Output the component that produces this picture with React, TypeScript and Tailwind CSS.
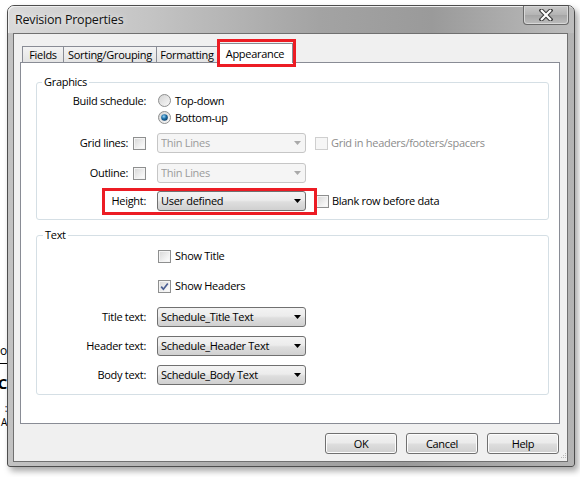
import React from "react";

function Arrow({ disabled }: { disabled?: boolean }) {
  return (
    <svg width="7" height="4" viewBox="0 0 7 4" className="shrink-0">
      <path d="M0 0H7L3.5 4Z" fill={disabled ? "#a9a9a9" : "#000"} />
    </svg>
  );
}

function Dropdown({ value, disabled }: { value: string; disabled?: boolean }) {
  return (
    <div
      className={
        disabled
          ? "w-[149px] h-[20px] rounded-[3px] border border-[#c6c6c6] bg-[#f5f5f5] text-[#9b9b9b] flex items-center pl-[3px] pr-[4px]"
          : "w-[149px] h-[20px] rounded-[3px] border border-[#707070] bg-[linear-gradient(#f3f3f3,#ececec_45%,#dedede_55%,#d0d0d0)] text-black flex items-center pl-[3px] pr-[4px]"
      }
    >
      <span className="flex-1 whitespace-nowrap overflow-hidden">{value}</span>
      <Arrow disabled={disabled} />
    </div>
  );
}

function Checkbox({ checked, disabled }: { checked?: boolean; disabled?: boolean }) {
  return (
    <span
      className={
        disabled
          ? "w-[13px] h-[13px] shrink-0 border border-[#cfcfcf] bg-[#f6f6f6] flex items-center justify-center"
          : "w-[13px] h-[13px] shrink-0 border border-[#8e8f8f] bg-[linear-gradient(135deg,#d6d6d6,#f4f4f4_70%,#ffffff)] shadow-[inset_0_0_0_1px_#f4f4f4] flex items-center justify-center"
      }
    >
      {checked && (
        <svg width="9" height="9" viewBox="0 0 9 9">
          <path d="M1.2 4.6L3.4 7.2L7.8 1.4" stroke="#4a5e92" strokeWidth="1.7" fill="none" />
        </svg>
      )}
    </span>
  );
}

function Radio({ checked }: { checked?: boolean }) {
  return (
    <svg width="13" height="13" viewBox="0 0 13 13" className="shrink-0">
      <defs>
        <linearGradient id="rg" x1="0" y1="0" x2="1" y2="1">
          <stop offset="0" stopColor="#d2d2d2" />
          <stop offset="1" stopColor="#fafafa" />
        </linearGradient>
        <radialGradient id="rd" cx="0.4" cy="0.35" r="0.7">
          <stop offset="0" stopColor="#9fd6f4" />
          <stop offset="0.5" stopColor="#1b6fa8" />
          <stop offset="1" stopColor="#0b3a62" />
        </radialGradient>
      </defs>
      <circle cx="6.5" cy="6.5" r="6" fill="url(#rg)" stroke="#8e8f8f" />
      {checked && <circle cx="6.5" cy="6.5" r="3.3" fill="url(#rd)" />}
    </svg>
  );
}

function Label({ children, w = "w-[109px]" }: { children: React.ReactNode; w?: string }) {
  return <div className={`${w} shrink-0 flex items-center justify-end gap-[5px] whitespace-nowrap`}>{children}</div>;
}

function Button({ children }: { children: React.ReactNode }) {
  return (
    <div className="w-[72px] h-[21px] rounded-[3px] border border-[#707070] bg-[linear-gradient(#f2f2f2,#ebebeb_45%,#dddddd_55%,#cfcfcf)] shadow-[inset_0_0_0_1px_#fcfcfc] flex items-center justify-center text-black">
      {children}
    </div>
  );
}

export default function App() {
  return (
    <div className="relative w-[580px] h-[477px] bg-white flex overflow-hidden font-['Open_Sans','Noto_Sans',sans-serif] text-[11px] tracking-[-0.3px] leading-[14px] text-black">
      {/* desktop behind the dialog */}
      <div className="w-[7px] shrink-0 overflow-hidden flex flex-col items-end pt-[344px] text-black">
        <span className="text-[12px] leading-[14px] whitespace-nowrap">Do</span>
        <div className="w-[7px] h-px bg-black mt-[5px]" />
        <span className="mt-[12px] text-[15px] leading-[15px] font-bold whitespace-nowrap">C</span>
        <span className="mt-[12px] text-[10px] leading-[10px] whitespace-nowrap">:</span>
        <span className="mt-[4px] text-[10px] leading-[10px] whitespace-nowrap">A</span>
      </div>

      {/* window */}
      <div className="mt-[5px] w-[568px] h-[462px] shrink-0 flex flex-col rounded-t-[7px] rounded-b-[3px] border border-[#4d4d4d] bg-[linear-gradient(90deg,#c2c2c2,#a9a9a9_45%,#9b9b9b_70%,#b4b4b4)] shadow-[3px_4px_6px_rgba(0,0,0,0.35)]">
        {/* title bar */}
        <div className="h-[27px] shrink-0 flex items-start bg-[linear-gradient(90deg,#dadada,#c4c4c4_25%,#a3a3a3_55%,#9a9a9a_75%,#bdbdbd)] rounded-t-[6px] shadow-[inset_1px_1px_0_#efefef]">
          <span className="ml-[7px] mt-[6px] text-[12.5px] leading-[16px] tracking-[-0.2px] text-[#111] [text-shadow:0_0_6px_#ffffff]">
            Revision Properties
          </span>
          <div className="flex-1" />
          <div className="mr-[5px] w-[46px] h-[19px] rounded-b-[4px] border border-t-0 border-[#6a6a6a] bg-[linear-gradient(#c9c9c9,#b3b3b3_50%,#a5a5a5_50%,#bcbcbc)] shadow-[inset_0_0_0_1px_#d8d8d8] flex items-center justify-center">
            <svg width="14" height="12" viewBox="0 0 14 12">
              <path d="M2.5 1.5L11.5 10.5M11.5 1.5L2.5 10.5" stroke="#3a3a3a" strokeWidth="4.2" strokeLinecap="square" />
              <path d="M2.8 1.8L11.2 10.2M11.2 1.8L2.8 10.2" stroke="#ffffff" strokeWidth="2.2" strokeLinecap="square" />
            </svg>
          </div>
        </div>

        {/* client area */}
        <div className="ml-[5px] mr-[6px] mb-[4px] flex-1 border border-[#707070] bg-[#f0f0f0] flex flex-col">
          {/* tabs */}
          <div className="ml-[6px] mt-[8px] h-[20px] flex items-end">
            <div className="ml-[2px] w-[42px] h-[16px] border border-b-0 border-[#898c95] bg-[linear-gradient(#f3f3f3,#e4e4e4)] flex items-center justify-center">
              Fields
            </div>
            <div className="-ml-px w-[94px] h-[16px] border border-b-0 border-[#898c95] bg-[linear-gradient(#f3f3f3,#e4e4e4)] flex items-center justify-center">
              Sorting/Grouping
            </div>
            <div className="-ml-px w-[62px] h-[16px] border border-b-0 border-[#898c95] bg-[linear-gradient(#f3f3f3,#e4e4e4)] flex items-center justify-center">
              Formatting
            </div>
            <div className="-ml-[1px] w-[76px] h-[20px] border border-b-0 border-[#898c95] bg-white flex items-center justify-center mb-[-1px] relative z-10">
              Appearance
            </div>
          </div>

          {/* tab panel */}
          <div className="ml-[6px] w-[540px] h-[362px] border border-[#898c95] bg-white flex flex-col pl-[15px] pr-[10px] pt-[12px]">
            {/* Graphics */}
            <fieldset className="border border-[#d5dfe5] rounded-[3px] pb-[8px]">
              <legend className="ml-[5px] px-[2px] leading-[14px]">Graphics</legend>
              <div className="flex flex-col pt-[3px]">
                <div className="h-[17px] flex items-center">
                  <Label>Build schedule:</Label>
                  <div className="ml-[12px] flex items-center gap-[4px]">
                    <Radio />
                    <span>Top-down</span>
                  </div>
                </div>
                <div className="h-[17px] flex items-center">
                  <Label>{""}</Label>
                  <div className="ml-[12px] flex items-center gap-[4px]">
                    <Radio checked />
                    <span>Bottom-up</span>
                  </div>
                </div>
                <div className="mt-[7px] h-[20px] flex items-center">
                  <Label>
                    <span>Grid lines:</span>
                    <Checkbox />
                  </Label>
                  <div className="ml-[11px]">
                    <Dropdown value="Thin Lines" disabled />
                  </div>
                  <div className="ml-[9px] flex items-center gap-[3px] text-[#8c8c8c]">
                    <Checkbox disabled />
                    <span>Grid in headers/footers/spacers</span>
                  </div>
                </div>
                <div className="mt-[10px] h-[20px] flex items-center">
                  <Label>
                    <span>Outline:</span>
                    <Checkbox />
                  </Label>
                  <div className="ml-[11px]">
                    <Dropdown value="Thin Lines" disabled />
                  </div>
                </div>
                <div className="mt-[8px] h-[20px] flex items-center">
                  <Label>Height:</Label>
                  <div className="ml-[11px]">
                    <Dropdown value="User defined" />
                  </div>
                  <div className="ml-[10px] flex items-center gap-[3px]">
                    <Checkbox />
                    <span>Blank row before data</span>
                  </div>
                </div>
              </div>
            </fieldset>

            {/* Text */}
            <fieldset className="mt-[8px] border border-[#d5dfe5] rounded-[3px] pb-[9px]">
              <legend className="ml-[6px] px-[2px] leading-[14px]">Text</legend>
              <div className="flex flex-col pt-[4px]">
                <div className="h-[20px] flex items-center">
                  <Label>{""}</Label>
                  <div className="ml-[12px] flex items-center gap-[4px]">
                    <Checkbox />
                    <span>Show Title</span>
                  </div>
                </div>
                <div className="mt-[10px] h-[20px] flex items-center">
                  <Label>{""}</Label>
                  <div className="ml-[12px] flex items-center gap-[4px]">
                    <Checkbox checked />
                    <span>Show Headers</span>
                  </div>
                </div>
                <div className="mt-[11px] h-[20px] flex items-center">
                  <Label>Title text:</Label>
                  <div className="ml-[11px]">
                    <Dropdown value="Schedule_Title Text" />
                  </div>
                </div>
                <div className="mt-[9px] h-[20px] flex items-center">
                  <Label>Header text:</Label>
                  <div className="ml-[11px]">
                    <Dropdown value="Schedule_Header Text" />
                  </div>
                </div>
                <div className="mt-[9px] h-[20px] flex items-center">
                  <Label>Body text:</Label>
                  <div className="ml-[11px]">
                    <Dropdown value="Schedule_Body Text" />
                  </div>
                </div>
              </div>
            </fieldset>
          </div>

          {/* buttons */}
          <div className="mt-[9px] flex items-start justify-end">
            <div className="flex gap-[9px]">
              <Button>OK</Button>
              <Button>Cancel</Button>
              <Button>Help</Button>
            </div>
            <svg width="7" height="7" viewBox="0 0 7 7" className="ml-[1px] mt-[19px]">
              <rect x="5" y="1" width="1" height="1" fill="#b8b8b8" />
              <rect x="3" y="3" width="1" height="1" fill="#b8b8b8" />
              <rect x="5" y="3" width="1" height="1" fill="#b8b8b8" />
              <rect x="1" y="5" width="1" height="1" fill="#b8b8b8" />
              <rect x="3" y="5" width="1" height="1" fill="#b8b8b8" />
              <rect x="5" y="5" width="1" height="1" fill="#b8b8b8" />
            </svg>
          </div>
        </div>
      </div>

      {/* red annotation boxes */}
      <div className="absolute left-[217px] top-[39px] w-[79px] h-[28px] border-[3px] border-[#ec1c24] z-20" />
      <div className="absolute left-[102px] top-[188px] w-[215px] h-[27px] border-[3px] border-[#ec1c24] z-20" />
    </div>
  );
}
